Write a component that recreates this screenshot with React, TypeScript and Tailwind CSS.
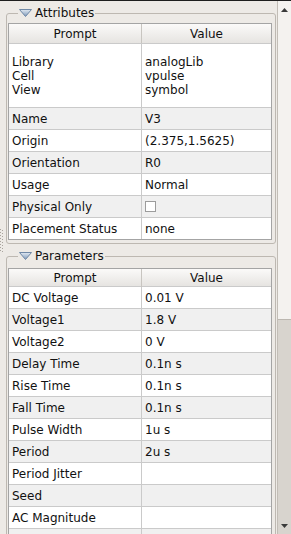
import type { ReactNode } from 'react'

type Row = { prompt: ReactNode; value: ReactNode; tall?: boolean }

const attributeRows: Array<Row> = [
  {
    prompt: (
      <>
        <div>Library</div>
        <div>Cell</div>
        <div>View</div>
      </>
    ),
    value: (
      <>
        <div>analogLib</div>
        <div>vpulse</div>
        <div>symbol</div>
      </>
    ),
    tall: true,
  },
  { prompt: 'Name', value: 'V3' },
  { prompt: 'Origin', value: '(2.375,1.5625)' },
  { prompt: 'Orientation', value: 'R0' },
  { prompt: 'Usage', value: 'Normal' },
  {
    prompt: 'Physical Only',
    value: <span className="block w-[11px] h-[11px] border border-[#9c9c9c] bg-white" />,
  },
  { prompt: 'Placement Status', value: 'none' },
]

const parameterRows: Array<Row> = [
  { prompt: 'DC Voltage', value: '0.01 V' },
  { prompt: 'Voltage1', value: '1.8 V' },
  { prompt: 'Voltage2', value: '0 V' },
  { prompt: 'Delay Time', value: '0.1n s' },
  { prompt: 'Rise Time', value: '0.1n s' },
  { prompt: 'Fall Time', value: '0.1n s' },
  { prompt: 'Pulse Width', value: '1u s' },
  { prompt: 'Period', value: '2u s' },
  { prompt: 'Period Jitter', value: '' },
  { prompt: 'Seed', value: '' },
  { prompt: 'AC Magnitude', value: '' },
  { prompt: '', value: '' },
]

function Expander() {
  return (
    <svg width="13" height="8" viewBox="0 0 13 8">
      <defs>
        <linearGradient id="exp" x1="0" y1="0" x2="0" y2="1">
          <stop offset="0" stopColor="#e2eaf3" />
          <stop offset="1" stopColor="#7d98b8" />
        </linearGradient>
      </defs>
      <polygon points="0.5,0.5 12.5,0.5 6.5,7.5" fill="url(#exp)" stroke="#6f88a6" strokeWidth="1" />
    </svg>
  )
}

function TableRow({ row, shade }: { row: Row; shade: boolean }) {
  return (
    <div
      className={
        'grid grid-cols-[133px_1fr] border-t border-[#cacaca] ' +
        (row.tall ? 'h-[64px] ' : 'h-[22px] ') +
        (shade ? 'bg-[#f0f0f0]' : 'bg-white')
      }
    >
      <div className="border-r border-[#cacaca] pl-[3px] flex flex-col justify-center leading-[14px] whitespace-nowrap">
        {row.prompt}
      </div>
      <div className="pl-[3px] flex flex-col justify-center leading-[14px] whitespace-nowrap">
        {row.value}
      </div>
    </div>
  )
}

function Group({
  title,
  rows,
  headerHeight,
  gap,
}: {
  title: string
  rows: Array<Row>
  headerHeight: string
  gap: string
}) {
  return (
    <fieldset className="w-[270px] border border-[#bdb8b1] rounded-[3px] pb-[3px] min-w-0">
      <legend className="ml-[11px] px-px leading-[14px]">
        <span className="inline-flex items-center gap-[3px] h-[14px]">
          <Expander />
          <span>{title}</span>
        </span>
      </legend>
      <div className={'ml-px mr-[3px] border border-[#a4a4a4] bg-white ' + gap}>
        <div
          className={
            'grid grid-cols-[133px_1fr] bg-linear-to-b from-[#fbfaf9] to-[#e6e4e1] text-center ' +
            headerHeight
          }
        >
          <div className="border-r border-[#c8c5c0] flex items-center justify-center">Prompt</div>
          <div className="flex items-center justify-center">Value</div>
        </div>
        {rows.map((row, i) => (
          <TableRow key={i} row={row} shade={i % 2 === 1} />
        ))}
      </div>
    </fieldset>
  )
}

function Grip() {
  return (
    <svg width="4" height="24" viewBox="0 0 4 24" className="mt-[228px]">
      {[0, 3, 6, 9, 12, 15, 18, 21].map((y) => (
        <g key={y}>
          <rect x="0" y={y} width="1" height="1" fill="#a9a49d" />
          <rect x="2" y={y + 1} width="1" height="1" fill="#a9a49d" />
        </g>
      ))}
    </svg>
  )
}

export default function App() {
  return (
    <div className="w-[291px] h-[534px] overflow-hidden flex flex-col bg-[#edeae6] text-[12px] text-[#111] font-['DejaVu_Sans',sans-serif]">
      <div className="h-px bg-[#1e1e1e] shrink-0" />
      <div className="flex flex-1 min-h-0">
        <div className="w-[6px] shrink-0 flex justify-start">
          <Grip />
        </div>
        <div className="w-[271px] shrink-0 flex flex-col">
          <div className="mt-[5px]">
            <Group title="Attributes" rows={attributeRows} headerHeight="h-[19px]" gap="mt-[3px]" />
          </div>
          <div className="mt-[5px]">
            <Group title="Parameters" rows={parameterRows} headerHeight="h-[17px]" gap="mt-[5px]" />
          </div>
        </div>
        <div className="w-[14px] shrink-0 flex flex-col bg-[#d8d4ce] border-l border-[#c2bdb6]">
          <div className="h-[18px] bg-[#f4f2ef] flex items-center justify-center">
            <svg width="7" height="4" viewBox="0 0 7 4">
              <polygon points="0,4 7,4 3.5,0" fill="#3a3a3a" />
            </svg>
          </div>
          <div className="h-[301px] bg-[#f4f2ef] border-b border-[#bcb7b0]" />
          <div className="flex-1" />
          <div className="h-[17px] flex items-center justify-center">
            <svg width="7" height="4" viewBox="0 0 7 4">
              <polygon points="0,0 7,0 3.5,4" fill="#3a3a3a" />
            </svg>
          </div>
        </div>
      </div>
    </div>
  )
}
